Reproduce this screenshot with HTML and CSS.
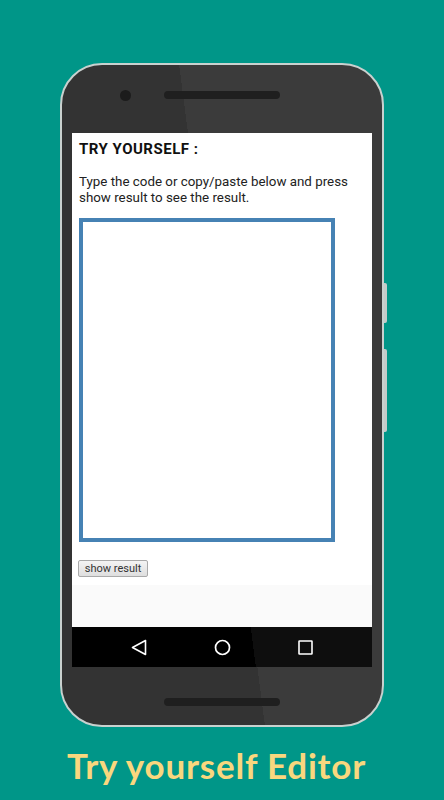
FILE: index.html
```html
<!DOCTYPE html>
<html lang="en">
<head>
    <meta charset="UTF-8">
    <meta name="viewport" content="width=device-width, initial-scale=1.0">
    <title>Try yourself Editor</title>
    <link rel="stylesheet" href="styles.css">
</head>
<body>
    <div class="phone">
        <div class="side-button volume"></div>
        <div class="side-button power"></div>

        <div class="bezel-top">
            <div class="camera"></div>
            <div class="speaker"></div>
        </div>

        <div class="screen">
            <div class="content">
                <h1>TRY YOURSELF :</h1>
                <p>Type the code or copy/paste below and press show result to see the result.</p>
                <textarea class="editor"></textarea>
                <button class="show-button">show result</button>
            </div>
            <div class="content-bottom"></div>
            <div class="nav-bar">
                <svg width="16" height="17" viewBox="0 0 16 17"><path d="M14.5 1.5 V15.5 L1.5 8.5 Z" fill="none" stroke="#fff" stroke-width="1.6" stroke-linejoin="round"/></svg>
                <svg width="17" height="17" viewBox="0 0 17 17"><circle cx="8.5" cy="8.5" r="7" fill="none" stroke="#fff" stroke-width="1.7"/></svg>
                <svg width="15" height="15" viewBox="0 0 15 15"><rect x="1" y="1" width="13" height="13" rx="0.5" fill="none" stroke="#fff" stroke-width="1.6"/></svg>
            </div>
        </div>

        <div class="bezel-bottom">
            <div class="speaker"></div>
        </div>
    </div>

    <div class="caption">Try yourself Editor</div>
</body>
</html>
```

FILE: styles.css
```css
body {
    margin: 0;
    height: 800px;
    overflow: hidden;
    background-color: #009688;
    font-family: Roboto, sans-serif;
    display: flex;
    flex-direction: column;
    align-items: center;
    padding-top: 63px;
    box-sizing: border-box;
}

.phone {
    position: relative;
    box-sizing: border-box;
    width: 324px;
    height: 664px;
    padding: 0 10px;
    border: 2px solid #c9d1cf;
    border-radius: 42px;
    background: linear-gradient(82.6deg, #333333 50%, #3b3b3b 50%);
}

.side-button {
    position: absolute;
    right: -5px;
    width: 3px;
    background-color: #c4cbc9;
    border-radius: 0 2px 2px 0;
}

.volume {
    top: 218px;
    height: 40px;
}

.power {
    top: 284px;
    height: 83px;
}

.bezel-top {
    height: 68px;
    display: flex;
    align-items: center;
    padding-left: 48px;
    padding-bottom: 8px;
    gap: 33px;
    box-sizing: border-box;
}

.camera {
    width: 11px;
    height: 11px;
    border-radius: 50%;
    background-color: #1c1c1c;
}

.speaker {
    width: 116px;
    height: 8px;
    border-radius: 4px;
    background-color: #1f1f1f;
}

.screen {
    height: 534px;
    display: flex;
    flex-direction: column;
}

.content {
    height: 452px;
    box-sizing: border-box;
    padding: 7px 7px 0;
    background-color: #fff;
    color: #1a1a1a;
}

.content h1 {
    margin: 0;
    font-size: 15px;
    line-height: 18px;
    font-weight: 700;
    letter-spacing: 0.5px;
    color: #111;
}

.content p {
    margin: 16px 0 0;
    font-size: 13.35px;
    line-height: 16px;
    color: #222;
}

.editor {
    display: block;
    box-sizing: border-box;
    width: 256px;
    height: 324px;
    margin: 12px 0 18px;
    padding: 0;
    border: 4px solid #4682b4;
    background-color: #fff;
    resize: none;
    outline: none;
}

.show-button {
    display: block;
    box-sizing: border-box;
    width: 70px;
    height: 17px;
    margin-left: -1px;
    padding: 0;
    border: 1px solid #a9a9a9;
    border-radius: 2px;
    background: linear-gradient(#f4f4f4, #dedede);
    font-family: Roboto, sans-serif;
    font-size: 11px;
    color: #333;
}

.content-bottom {
    height: 42px;
    background-color: #fafafa;
}

.nav-bar {
    height: 40px;
    display: flex;
    align-items: center;
    background: linear-gradient(82.6deg, #000 calc(50% + 31px), #0e0e0e calc(50% + 31px));
    padding-left: 59px;
    gap: 67px;
}

.bezel-bottom {
    height: 58px;
    display: flex;
    justify-content: center;
    padding-top: 31px;
    box-sizing: border-box;
}

.caption {
    margin-top: 16px;
    margin-right: 11px;
    font-family: Lato, sans-serif;
    font-weight: 700;
    font-size: 35px;
    line-height: 44px;
    letter-spacing: 0.8px;
    color: #f9d77e;
}
```
